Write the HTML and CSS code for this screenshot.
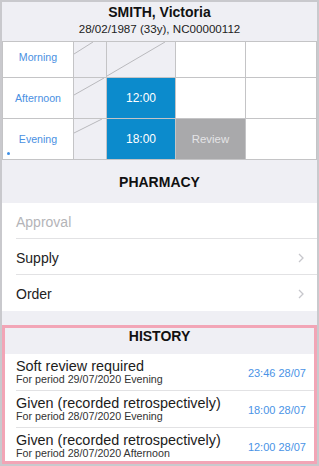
FILE: index.html
```html
<!DOCTYPE html>
<html>
<head>
<meta charset="utf-8">
<link rel="stylesheet" href="styles.css">
</head>
<body>
<div class="screen">
  <div class="patient">
    <div class="patient-name">SMITH, Victoria</div>
    <div class="patient-meta">28/02/1987 (33y), NC00000112</div>
  </div>

  <div class="grid">
    <div class="cell label">Morning</div>
    <div class="cell na"><svg viewBox="0 0 32 35" preserveAspectRatio="none"><line x1="0" y1="12" x2="19" y2="0"/></svg></div>
    <div class="cell na"><svg viewBox="0 0 68 35" preserveAspectRatio="none"><line x1="0" y1="34" x2="58" y2="0"/></svg></div>
    <div class="cell"></div>
    <div class="cell"></div>

    <div class="cell label">Afternoon</div>
    <div class="cell na"><svg viewBox="0 0 32 40" preserveAspectRatio="none"><line x1="0" y1="17" x2="30" y2="0"/></svg></div>
    <div class="cell dose">12:00</div>
    <div class="cell"></div>
    <div class="cell"></div>

    <div class="cell label">Evening<span class="dot"></span></div>
    <div class="cell na"><svg viewBox="0 0 32 40" preserveAspectRatio="none"><line x1="0" y1="14" x2="28" y2="0"/></svg></div>
    <div class="cell dose">18:00</div>
    <div class="cell review">Review</div>
    <div class="cell"></div>
  </div>

  <div class="section-title pharmacy-title">PHARMACY</div>
  <div class="menu">
    <div class="menu-row disabled"><span>Approval</span></div>
    <div class="menu-row"><span>Supply</span><svg class="chev" viewBox="0 0 6 10"><path d="M1 1l4 4-4 4"/></svg></div>
    <div class="menu-row last"><span>Order</span><svg class="chev" viewBox="0 0 6 10"><path d="M1 1l4 4-4 4"/></svg></div>
  </div>

  <div class="history">
    <div class="section-title history-title">HISTORY</div>
    <div class="history-list">
      <div class="history-row">
        <div class="history-text">
          <div class="history-main">Soft review required</div>
          <div class="history-sub">For period 29/07/2020 Evening</div>
        </div>
        <div class="history-time">23:46 28/07</div>
      </div>
      <div class="history-row">
        <div class="history-text">
          <div class="history-main">Given (recorded retrospectively)</div>
          <div class="history-sub">For period 28/07/2020 Evening</div>
        </div>
        <div class="history-time">18:00 28/07</div>
      </div>
      <div class="history-row">
        <div class="history-text">
          <div class="history-main">Given (recorded retrospectively)</div>
          <div class="history-sub">For period 28/07/2020 Afternoon</div>
        </div>
        <div class="history-time">12:00 28/07</div>
      </div>
    </div>
  </div>
</div>
</body>
</html>
```

FILE: styles.css
```css
html, body {
  margin: 0;
  padding: 0;
  background: #ffffff;
}

.screen {
  width: 319px;
  height: 466px;
  box-sizing: border-box;
  border: 2px solid #c9c9cd;
  background: #efeff4;
  overflow: hidden;
  display: flex;
  flex-direction: column;
  font-family: "Liberation Sans", Arial, sans-serif;
  color: #1c1c1c;
}

.patient {
  height: 39px;
  padding-top: 2px;
  box-sizing: border-box;
  text-align: center;
  flex: none;
}

.patient-name {
  font-size: 14px;
  font-weight: bold;
  line-height: 16px;
  color: #111;
}

.patient-meta {
  font-size: 11.6px;
  line-height: 17px;
  color: #222;
}

.grid {
  flex: none;
  display: grid;
  grid-template-columns: 70px 32px 68px 69px 70px;
  grid-template-rows: 35px 40px 40px;
  gap: 1px;
  padding: 1px 0 1px 1px;
  background: #c4c4c6;
}

.cell {
  background: #ffffff;
  position: relative;
  display: flex;
  align-items: center;
  justify-content: center;
  overflow: hidden;
}

.cell svg {
  width: 100%;
  height: 100%;
  display: block;
}

.cell svg line {
  stroke: #b9b9bd;
  stroke-width: 1;
  vector-effect: non-scaling-stroke;
}

.label {
  font-size: 10.6px;
  color: #4a90e2;
}

.label:first-child {
  padding-bottom: 6px;
  box-sizing: border-box;
}

.dot {
  position: absolute;
  left: 4px;
  bottom: 4px;
  width: 3px;
  height: 3px;
  border-radius: 50%;
  background: #3d8ee6;
}

.na {
  background: #efeff4;
}

.dose {
  background: #0c8bcc;
  color: #ffffff;
  font-size: 12px;
}

.review {
  background: #a9a9ab;
  color: #e4e4e6;
  font-size: 11.4px;
}

.section-title {
  text-align: center;
  font-weight: bold;
  font-size: 14px;
  color: #111;
  flex: none;
}

.pharmacy-title {
  height: 43px;
  line-height: 43px;
  padding-top: 1px;
  box-sizing: border-box;
}

.menu {
  background: #ffffff;
  flex: none;
}

.menu-row {
  margin-left: 14px;
  padding-right: 13px;
  height: 36px;
  box-sizing: border-box;
  padding-top: 2px;
  display: flex;
  align-items: center;
  justify-content: space-between;
  font-size: 14px;
  color: #222;
  border-bottom: 1px solid #e2e2e4;
}

.menu-row:first-child {
  height: 36px;
}

.menu-row.last {
  border-bottom: none;
}

.menu-row.disabled {
  color: #b4b4b8;
}

.chev {
  width: 6px;
  height: 10px;
}

.chev path {
  fill: none;
  stroke: #c7c7cc;
  stroke-width: 1.3;
}

.history {
  margin-top: 14px;
  flex: 1;
  border: 3px solid #f2a5b6;
  overflow: hidden;
  display: flex;
  flex-direction: column;
}

.history-title {
  height: 26px;
  line-height: 16px;
}

.history-list {
  background: #ffffff;
  flex: 1;
}

.history-row {
  margin-left: 11px;
  padding-right: 8px;
  height: 37px;
  box-sizing: border-box;
  border-bottom: 1px solid #e2e2e4;
  display: flex;
  align-items: center;
  justify-content: space-between;
}

.history-text {
  align-self: flex-start;
  padding-top: 4px;
}

.history-main {
  font-size: 14.4px;
  line-height: 16px;
  color: #1c1c1c;
}

.history-sub {
  font-size: 10.7px;
  line-height: 10px;
  color: #333;
}

.history-time {
  font-size: 11px;
  color: #4a93e6;
  padding-top: 2px;
}
```
